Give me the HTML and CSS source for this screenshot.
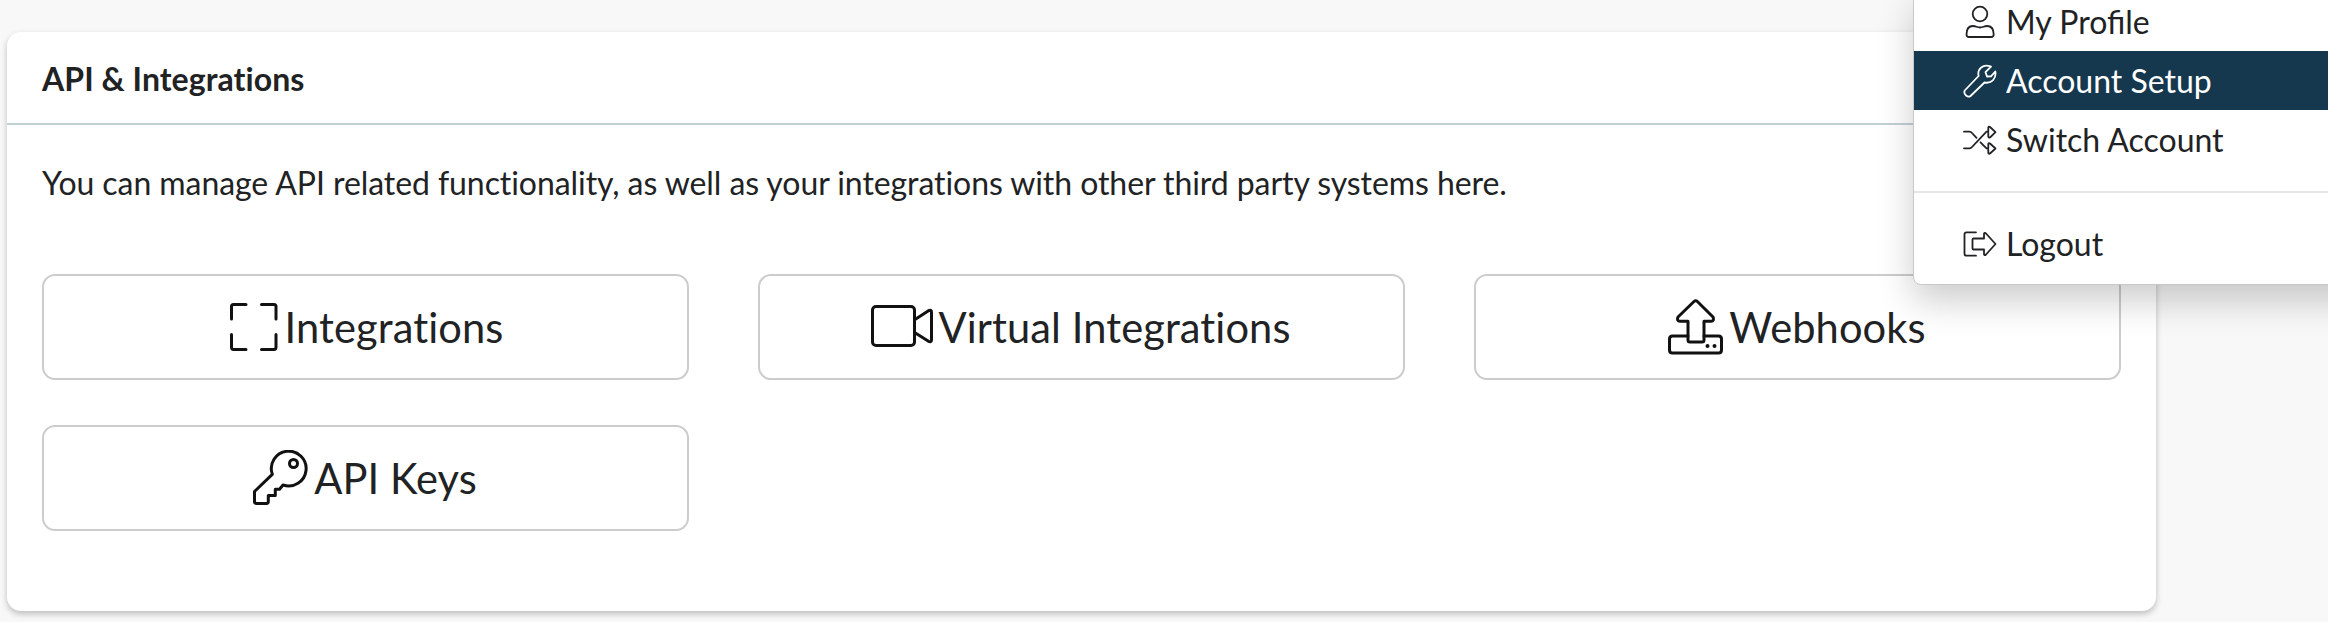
FILE: index.html
```html
<!DOCTYPE html>
<html lang="en">
<head>
  <meta charset="UTF-8" />
  <meta name="viewport" content="width=device-width, initial-scale=1.0" />
  <title>API &amp; Integrations</title>
  <link rel="stylesheet" href="styles.css">
</head>
<body>
  <div class="card">
    <div class="card-header">
      <h1>API &amp; Integrations</h1>
    </div>
    <div class="card-body">
      <p class="intro">You can manage API related functionality, as well as your integrations with other third party systems here.</p>
      <div class="tiles">
        <a class="tile">
          <svg class="tile-icon" width="53" height="56" viewBox="0 0 53 56">
            <path d="M19 5.500H6.500Q4.500 5.500 4.500 7.500V20M34.500 5.500H47Q49 5.500 49 7.500V20M49 35.500V48Q49 50.500 47 50.500H34.500M19 50.500H6.500Q4.500 50.500 4.500 48V35.500" />
          </svg>
          <span>Integrations</span>
        </a>
        <a class="tile">
          <svg class="tile-icon" width="62" height="56" viewBox="0 0 62 56">
            <rect x="1.500" y="7.500" width="42" height="39" rx="3.500" />
            <path d="M44 20.500L57.500 11.700Q60.500 10.500 60.500 13V41Q60.500 43.500 57.500 42.300L44 33.700" />
          </svg>
          <span>Virtual Integrations</span>
        </a>
        <a class="tile">
          <svg class="tile-icon" width="56" height="56" viewBox="0 0 56 56">
            <path d="M20 37H4.500Q1.500 37 1.500 40V51Q1.500 54 4.500 54H50.500Q53.500 54 53.500 51V40Q53.500 37 50.500 37H36" />
            <path d="M26 2.500Q27.700 1 29.400 2.500L45 18Q46.500 22 43 22.300H36V41Q36 43 34 43H22Q20 43 20 41V22.300H12Q8.500 22 10 18Z" />
            <circle class="dot" cx="39.500" cy="47" r="2" />
            <circle class="dot" cx="46.500" cy="47" r="2" />
          </svg>
          <span>Webhooks</span>
        </a>
        <a class="tile">
          <svg class="tile-icon" width="56" height="56" viewBox="0 0 56 56">
            <path d="M19.300 24.300A17.400 17.400 0 1 1 30 35L26.500 39.300H22.300V45.500H15.300V51.500Q15.300 53.400 13.500 53.400H3.500Q1.500 53.400 1.500 51.500V41.500Z" />
            <circle cx="40.500" cy="13.500" r="4" />
          </svg>
          <span>API Keys</span>
        </a>
      </div>
    </div>
  </div>

  <div class="menu">
    <a class="menu-item">
      <svg class="menu-icon" width="34" height="36" viewBox="0 0 34 36">
        <circle cx="17" cy="10" r="7.300" />
        <path d="M3.500 30.500C3.500 25 6 22 10 22C13 22 14 23.500 17 23.500C20 23.500 21 22 24 22C28 22 30.700 25 30.700 30.500Q30.700 33 28 33H6Q3.500 33 3.500 30.500Z" />
      </svg>
      <span>My Profile</span>
    </a>
    <a class="menu-item active">
      <svg class="menu-icon" width="34" height="36" viewBox="0 0 34 36">
        <path d="M28 3.700L22.500 9.200L24 13.500L28 13.300L32.300 8.500C33.500 15 29 21 21.500 19.500L7.500 33C5 35 0 31.500 1.700 27.500L15.600 13C14 6 20 0.500 28 3.700Z" />
      </svg>
      <span>Account Setup</span>
    </a>
    <a class="menu-item">
      <svg class="menu-icon" width="34" height="36" viewBox="0 0 34 36">
        <path d="M1 9.700H6.500Q8 9.700 9 11L13.500 15.800M1 26.300H6.500Q8 26.300 9 25L23.500 9.700H25.300V5.500Q25.700 4 27 5L32.500 10.200L27 15.500Q25.700 16 25.300 14.500V11" />
        <path d="M17.500 20.300L23.500 26.300H25.300V22Q25.700 20.700 27 21.500L32.500 26.500L27 31.500Q25.700 32.200 25.300 30.700V27.500" />
      </svg>
      <span>Switch Account</span>
    </a>
    <div class="divider"></div>
    <a class="menu-item">
      <svg class="menu-icon" width="34" height="36" viewBox="0 0 34 36">
        <path d="M13 6.300H3.500Q1.500 6.300 1.500 8.300V27.700Q1.500 29.700 3.500 29.700H13" />
        <path d="M10.500 12.500H21V8Q21.300 6 23 7.500L32.500 18L23 28.500Q21.300 30 21 28V23.500H10.500Q9.500 23.500 9.500 22.500V13.500Q9.500 12.500 10.500 12.500Z" />
      </svg>
      <span>Logout</span>
    </a>
  </div>
</body>
</html>
```

FILE: styles.css
```css
html, body {
  margin: 0;
  padding: 0;
  height: 100%;
  overflow: hidden;
}

body {
  box-sizing: border-box;
  padding: 32px 172px 12px 7px;
  background: #f8f8f8;
  color: #212224;
  font-family: Lato, sans-serif;
  font-size: 32px;
}

.card {
  height: 579px;
  background: #fff;
  border-radius: 14px;
  box-shadow: 0 3px 6px rgba(0, 0, 0, 0.24);
  font-variant-ligatures: none;
}

.card-header {
  display: flex;
  align-items: center;
  box-sizing: border-box;
  height: 93px;
  padding: 1px 35px 0;
  border-bottom: 2px solid #c3d0d5;
}

h1 {
  margin: 0;
  font-size: 32px;
  font-weight: 700;
  letter-spacing: 0.06px;
}

.card-body {
  padding: 34px 35px;
}

.intro {
  margin: 0 0 67px;
  line-height: 48px;
  letter-spacing: -0.07px;
}

.tiles {
  display: grid;
  grid-template-columns: repeat(3, 1fr);
  column-gap: 69px;
  row-gap: 45px;
}

.tile {
  display: flex;
  align-items: center;
  justify-content: center;
  gap: 5px;
  box-sizing: border-box;
  height: 106px;
  padding-right: 1px;
  border: 2px solid #ccc;
  border-radius: 13px;
  font-size: 41.600px;
  letter-spacing: 0.1px;
  cursor: pointer;
}

.tile-icon,
.menu-icon {
  flex: none;
  fill: none;
  stroke: currentColor;
  stroke-linejoin: round;
  stroke-linecap: round;
}

.tile-icon {
  color: #111;
  stroke-width: 3;
}

.tile-icon .dot {
  fill: currentColor;
  stroke: none;
}

.menu {
  position: absolute;
  top: -9px;
  right: -60px;
  box-sizing: border-box;
  width: 475px;
  height: 294px;
  background: #fff;
  border: 1px solid #c8c8c8;
  border-radius: 8px;
  box-shadow: 0 16px 36px rgba(0, 0, 0, 0.2);
}

.menu-item {
  display: flex;
  align-items: center;
  gap: 9px;
  height: 59px;
  padding-left: 49px;
  cursor: pointer;
}

.menu-icon {
  stroke-width: 1.8;
}

.menu-item.active {
  background: #16384e;
  color: #fff;
}

.divider {
  height: 2px;
  margin: 22px 0 21px;
  background: #e6e6e6;
}
```
